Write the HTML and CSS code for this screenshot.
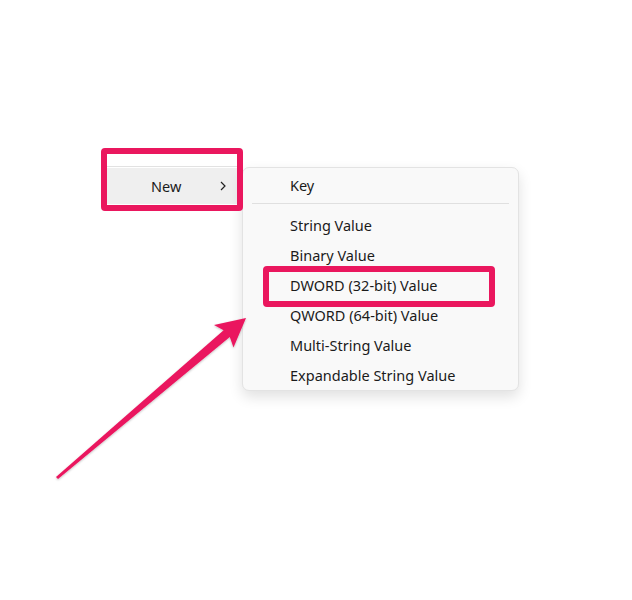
FILE: index.html
```html
<!DOCTYPE html>
<html lang="en">

<head>
    <meta charset="UTF-8">
    <meta name="viewport" content="width=device-width, initial-scale=1.0">
    <title>New DWORD Value</title>
    <link rel="stylesheet" href="styles.css">
</head>

<body>
    <div class="stage">
        <!-- parent context menu, only the "New" row is visible -->
        <div class="parent-menu">
            <div class="separator"></div>
            <div class="parent-item">
                <span class="parent-label">New</span>
                <svg class="chevron" width="8" height="12" viewBox="0 0 8 12">
                    <path d="M2 2 L6 6 L2 10" fill="none" stroke="#222" stroke-width="1.2" />
                </svg>
            </div>
        </div>

        <!-- submenu -->
        <div class="submenu">
            <div class="menu-item">Key</div>
            <div class="menu-separator"></div>
            <div class="menu-item">String Value</div>
            <div class="menu-item">Binary Value</div>
            <div class="menu-item">DWORD (32-bit) Value</div>
            <div class="menu-item">QWORD (64-bit) Value</div>
            <div class="menu-item">Multi-String Value</div>
            <div class="menu-item">Expandable String Value</div>
        </div>

        <!-- annotations -->
        <div class="highlight highlight-new"></div>
        <div class="highlight highlight-dword"></div>

        <svg class="pointer" width="632" height="600" viewBox="0 0 632 600">
            <defs>
                <filter id="soft" x="-10%" y="-10%" width="120%" height="120%">
                    <feDropShadow dx="0" dy="1" stdDeviation="1" flood-color="#000" flood-opacity="0.25" />
                </filter>
            </defs>
            <polygon filter="url(#soft)" fill="#ea175e"
                points="56,477 58,479 229.8,337 233.5,347.5 246,318 214,325 223.6,330.2" />
        </svg>
    </div>
</body>

</html>
```

FILE: styles.css
```css
body {
    margin: 0;
    padding: 0;
    background: #ffffff;
    font-family: 'Noto Sans', 'Open Sans', sans-serif;
    color: #1b1b1b;
}

.stage {
    position: relative;
    width: 632px;
    height: 600px;
    overflow: hidden;
}

/* Parent menu fragment */
.parent-menu {
    position: absolute;
    left: 107px;
    top: 166px;
    width: 130px;
}

.separator {
    height: 1px;
    background: #e2e2e2;
}

.parent-item {
    display: flex;
    align-items: center;
    justify-content: space-between;
    height: 36px;
    margin-top: 1px;
    padding: 0 10px 0 44px;
    background: #efefef;
    font-size: 14.5px;
}

.parent-label {
    padding-bottom: 1px;
}

/* Submenu */
.submenu {
    position: absolute;
    left: 242px;
    top: 167px;
    width: 275px;
    padding: 2px 0 0;
    background: #f9f9f9;
    border: 1px solid #e3e3e3;
    border-radius: 7px;
    box-shadow: 0 6px 14px rgba(0, 0, 0, 0.12);
}

.menu-item {
    height: 30px;
    line-height: 30px;
    padding-left: 47px;
    font-size: 14.5px;
    white-space: nowrap;
}

.menu-separator {
    height: 1px;
    margin: 3px 9px 6px;
    background: #e0e0e0;
}

/* Red annotation boxes */
.highlight {
    position: absolute;
    border: 6px solid #ea175e;
    border-radius: 4px;
    box-sizing: border-box;
}

.highlight-new {
    left: 101px;
    top: 148px;
    width: 142px;
    height: 63px;
}

.highlight-dword {
    left: 263px;
    top: 266px;
    width: 232px;
    height: 41px;
}

.pointer {
    position: absolute;
    left: 0;
    top: 0;
}
```
